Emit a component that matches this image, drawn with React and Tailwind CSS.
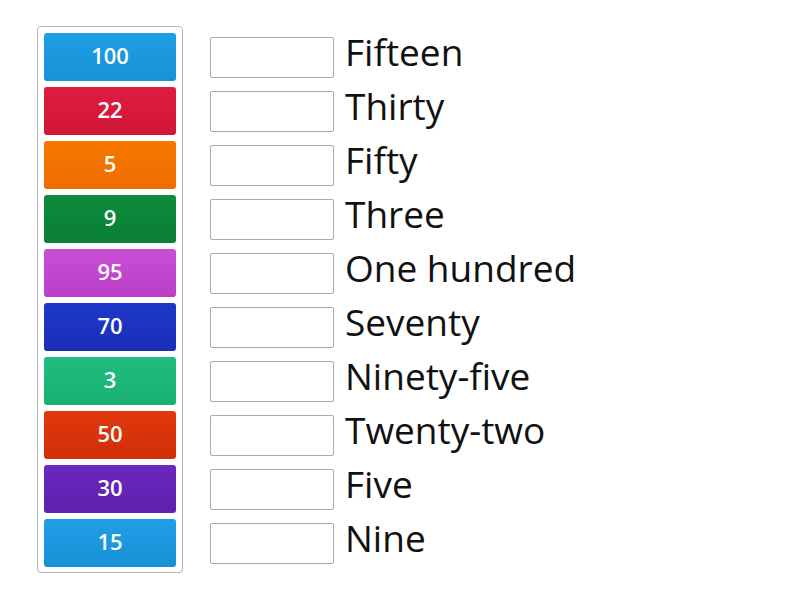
import React from "react";

const tiles = [
  { n: "100", c: "bg-[linear-gradient(#1f9fe6,#1890d6)]" },
  { n: "22", c: "bg-[linear-gradient(#de1d40,#d01636)]" },
  { n: "5", c: "bg-[linear-gradient(#f77800,#ee6d00)]" },
  { n: "9", c: "bg-[linear-gradient(#0c8c3c,#0a7f35)]" },
  { n: "95", c: "bg-[linear-gradient(#c94fd6,#bb3ec6)]" },
  { n: "70", c: "bg-[linear-gradient(#1d38c8,#1a2fb8)]" },
  { n: "3", c: "bg-[linear-gradient(#20bd80,#18b072)]" },
  { n: "50", c: "bg-[linear-gradient(#df380e,#d22e08)]" },
  { n: "30", c: "bg-[linear-gradient(#6a28bc,#5e20ae)]" },
  { n: "15", c: "bg-[linear-gradient(#1f9fe6,#1890d6)]" },
];

const words = [
  { w: "Fifteen", o: "" },
  { w: "Thirty", o: "ml-[3px]" },
  { w: "Fifty", o: "" },
  { w: "Three", o: "ml-[3px]" },
  { w: "One hundred", o: "" },
  { w: "Seventy", o: "" },
  { w: "Ninety-five", o: "" },
  { w: "Twenty-two", o: "ml-[3px]" },
  { w: "Five", o: "" },
  { w: "Nine", o: "" },
];

export default function App() {
  return (
    <div
      className="w-[800px] h-[600px] bg-white flex items-start pl-[37px] pt-[26px]"
      style={{ fontFamily: '"Open Sans", "Noto Sans", sans-serif' }}
    >
      <div className="w-[146px] border border-[#b4b4b4] rounded-[4px] pt-[6px] pb-[5px] px-[6px] flex flex-col gap-[6px]">
        {tiles.map((t, i) => (
          <div
            key={i}
            className={`h-[48px] rounded-[3px] flex items-center justify-center pb-[3px] text-white font-semibold text-[22px] ${t.c}`}
          >
            {t.n}
          </div>
        ))}
      </div>
      <div className="ml-[27px] pt-[7px] flex flex-col gap-[6px]">
        {words.map((w, i) => (
          <div key={i} className="h-[48px] flex items-center">
            <div className="w-[124px] h-[41px] border border-[#aaaaaa] rounded-[2px] bg-white" />
            <span className={`ml-[11px] mb-[11px] text-[37px] text-[#111] leading-none ${w.o}`}>{w.w}</span>
          </div>
        ))}
      </div>
    </div>
  );
}
